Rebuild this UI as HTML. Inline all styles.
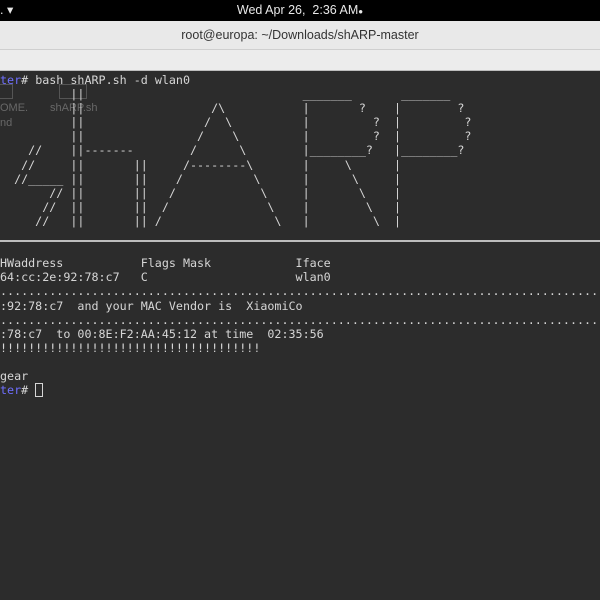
<!DOCTYPE html>
<html><head><style>
body{margin:0;width:600px;height:600px;overflow:hidden;background:#2c2c2c;position:relative;font-family:"Liberation Sans",sans-serif}
#top{position:absolute;left:0;top:0;width:600px;height:21px;background:#000;color:#e8e8e8;font-size:12.5px;text-align:center;line-height:21px}
#title{position:absolute;left:0;top:21px;width:600px;height:28px;background:#e9e9e9;border-bottom:1px solid #cfcfcf;color:#333;font-size:12.5px;text-align:center;line-height:28px}
#tool{position:absolute;left:0;top:50px;width:600px;height:20px;background:#ececec;border-bottom:1px solid #bdbdbd}
pre{position:absolute;left:0;top:73px;margin:0;font-family:"DejaVu Sans Mono",monospace;font-size:11.7px;line-height:14.1px;color:#d6d6d6;white-space:pre}
.b{color:#6f6fff}
.ghost{position:absolute;color:#777;font-size:11px;opacity:.8}
#hr{position:absolute;left:0;top:240px;width:600px;height:2px;background:#bdbdbd}
.cur{display:inline-block;width:8px;height:14px;border:1px solid #d6d6d6;box-sizing:border-box;vertical-align:-3px}
</style></head><body>
<div id="top"><span style="position:absolute;left:0">. ▾</span>Wed Apr 26,&nbsp; 2:36 AM<span style="font-size:8px">●</span></div>
<div id="title">root@europa: ~/Downloads/shARP-master</div>
<div id="tool"></div>
<div class="ghost" style="left:0;top:102px">OME.</div>
<div class="ghost" style="left:50px;top:102px">shARP.sh</div>
<div class="ghost" style="left:0;top:117px">nd</div>
<div style="position:absolute;left:0;top:84px;width:12px;height:13px;border:1px solid #555;border-left:none"></div>
<div style="position:absolute;left:59px;top:84px;width:26px;height:13px;border:1px solid #555"></div>
<div id="hr"></div>
<pre><span class="b">ter</span># bash shARP.sh -d wlan0
          ||                               _______       _______
          ||                  /\           |       ?    |        ?
          ||                 /  \          |         ?  |         ?
          ||                /    \         |         ?  |         ?
    //    ||-------        /      \        |________?   |________?
   //     ||       ||     /--------\       |     \      |
  //_____ ||       ||    /          \      |      \     |
       // ||       ||   /            \     |       \    |
      //  ||       ||  /              \    |        \   |
     //   ||       || /                \   |         \  |


HWaddress           Flags Mask            Iface
64:cc:2e:92:78:c7   C                     wlan0
.....................................................................................
:92:78:c7  and your MAC Vendor is  XiaomiCo
.....................................................................................
:78:c7  to 00:8E:F2:AA:45:12 at time  02:35:56
!!!!!!!!!!!!!!!!!!!!!!!!!!!!!!!!!!!!!

gear
<span class="b">ter</span># <span class="cur"></span></pre>
</body></html>
